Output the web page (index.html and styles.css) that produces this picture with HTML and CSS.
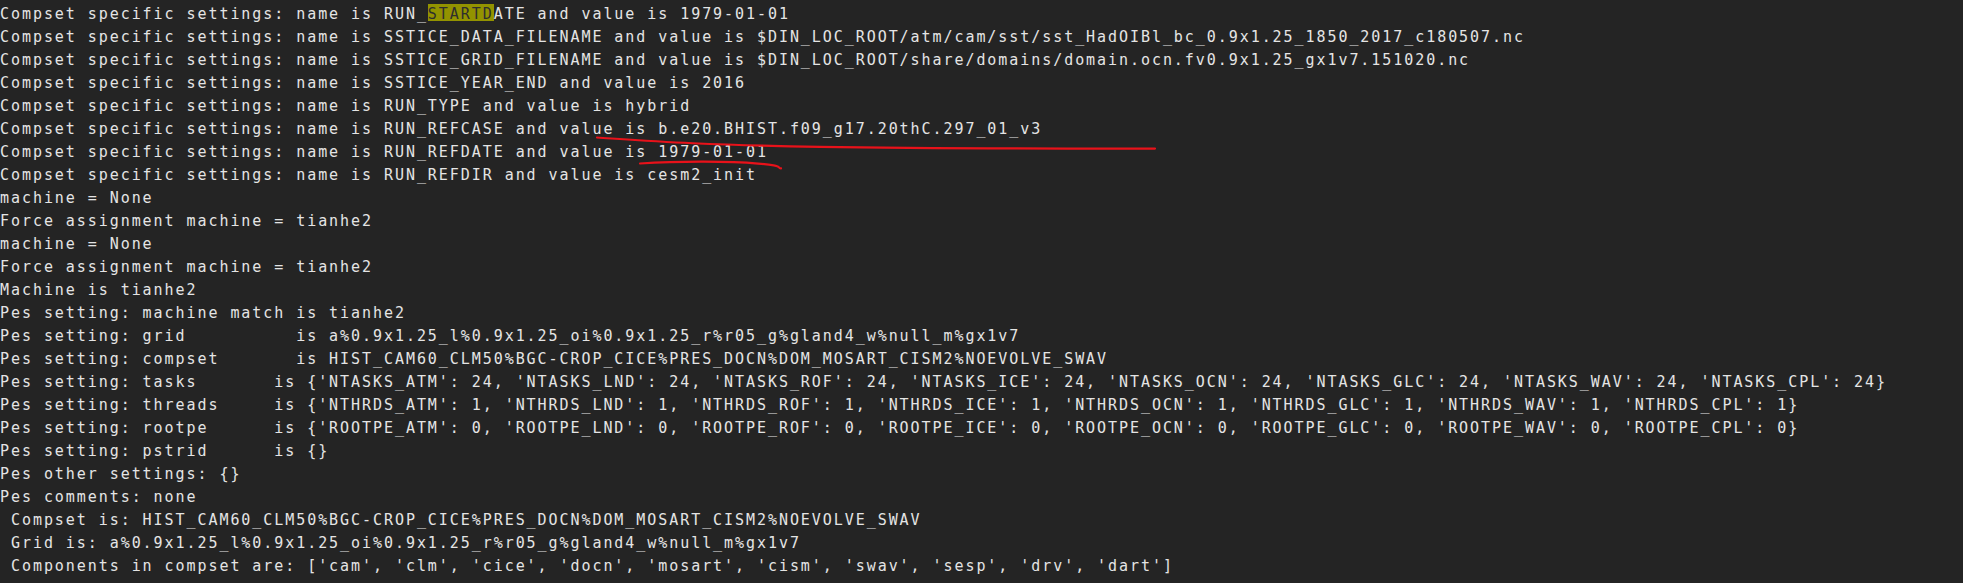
FILE: index.html
```html
<!DOCTYPE html>
<html>
<head>
<meta charset="utf-8">
<link rel="stylesheet" href="styles.css">
</head>
<body>
<div class="term">
<div class="out">
<div class="line">Compset specific settings: name is SSTICE_YEAR_ALIGN and value is 1850, grid /share/domains/ocn_gx1v7_jra_year_ [map]</div>
<div class="line">Compset specific settings: name is RUN_<span class="hl">STARTD</span>ATE and value is 1979-01-01</div>
<div class="line">Compset specific settings: name is SSTICE_DATA_FILENAME and value is $DIN_LOC_ROOT/atm/cam/sst/sst_HadOIBl_bc_0.9x1.25_1850_2017_c180507.nc</div>
<div class="line">Compset specific settings: name is SSTICE_GRID_FILENAME and value is $DIN_LOC_ROOT/share/domains/domain.ocn.fv0.9x1.25_gx1v7.151020.nc</div>
<div class="line">Compset specific settings: name is SSTICE_YEAR_END and value is 2016</div>
<div class="line">Compset specific settings: name is RUN_TYPE and value is hybrid</div>
<div class="line">Compset specific settings: name is RUN_REFCASE and value is b.e20.BHIST.f09_g17.20thC.297_01_v3</div>
<div class="line">Compset specific settings: name is RUN_REFDATE and value is 1979-01-01</div>
<div class="line">Compset specific settings: name is RUN_REFDIR and value is cesm2_init</div>
<div class="line">machine = None</div>
<div class="line">Force assignment machine = tianhe2</div>
<div class="line">machine = None</div>
<div class="line">Force assignment machine = tianhe2</div>
<div class="line">Machine is tianhe2</div>
<div class="line">Pes setting: machine match is tianhe2</div>
<div class="line">Pes setting: grid          is a%0.9x1.25_l%0.9x1.25_oi%0.9x1.25_r%r05_g%gland4_w%null_m%gx1v7</div>
<div class="line">Pes setting: compset       is HIST_CAM60_CLM50%BGC-CROP_CICE%PRES_DOCN%DOM_MOSART_CISM2%NOEVOLVE_SWAV</div>
<div class="line">Pes setting: tasks       is {'NTASKS_ATM': 24, 'NTASKS_LND': 24, 'NTASKS_ROF': 24, 'NTASKS_ICE': 24, 'NTASKS_OCN': 24, 'NTASKS_GLC': 24, 'NTASKS_WAV': 24, 'NTASKS_CPL': 24}</div>
<div class="line">Pes setting: threads     is {'NTHRDS_ATM': 1, 'NTHRDS_LND': 1, 'NTHRDS_ROF': 1, 'NTHRDS_ICE': 1, 'NTHRDS_OCN': 1, 'NTHRDS_GLC': 1, 'NTHRDS_WAV': 1, 'NTHRDS_CPL': 1}</div>
<div class="line">Pes setting: rootpe      is {'ROOTPE_ATM': 0, 'ROOTPE_LND': 0, 'ROOTPE_ROF': 0, 'ROOTPE_ICE': 0, 'ROOTPE_OCN': 0, 'ROOTPE_GLC': 0, 'ROOTPE_WAV': 0, 'ROOTPE_CPL': 0}</div>
<div class="line">Pes setting: pstrid      is {}</div>
<div class="line">Pes other settings: {}</div>
<div class="line">Pes comments: none</div>
<div class="line"> Compset is: HIST_CAM60_CLM50%BGC-CROP_CICE%PRES_DOCN%DOM_MOSART_CISM2%NOEVOLVE_SWAV</div>
<div class="line"> Grid is: a%0.9x1.25_l%0.9x1.25_oi%0.9x1.25_r%r05_g%gland4_w%null_m%gx1v7</div>
<div class="line"> Components in compset are: ['cam', 'clm', 'cice', 'docn', 'mosart', 'cism', 'swav', 'sesp', 'drv', 'dart']</div>
</div>
<svg class="marks" width="1963" height="583" viewBox="0 0 1963 583">
<path d="M597 137.5 C 650 141, 700 145, 820 146.8 S 1050 148.5, 1155 148.6" fill="none" stroke="#e8121a" stroke-width="2.2" stroke-linecap="round"/>
<path d="M640 163.5 C 680 161, 730 161.2, 758 163.6 S 776 167.5, 781 168.4" fill="none" stroke="#e8121a" stroke-width="2.2" stroke-linecap="round"/>
</svg>
</div>
</body>
</html>
```

FILE: styles.css
```css
html, body {
  margin: 0;
  padding: 0;
  background: #242424;
}

.term {
  position: relative;
  width: 1963px;
  height: 583px;
  overflow: hidden;
  background: #242424;
}

.out {
  margin-top: -20px;
  font-family: "DejaVu Sans Mono", monospace;
  font-size: 15px;
  letter-spacing: 1.94px;
  line-height: 23px;
  color: #e4e4e4;
}

.line {
  white-space: pre;
  height: 23px;
}

.hl {
  background: linear-gradient(to bottom, #939300 0, #939300 16.7px, transparent 16.7px);
  padding-top: 1.4px;
  color: #2e2e2e;
}

.marks {
  position: absolute;
  left: 0;
  top: 0;
  pointer-events: none;
}
```
